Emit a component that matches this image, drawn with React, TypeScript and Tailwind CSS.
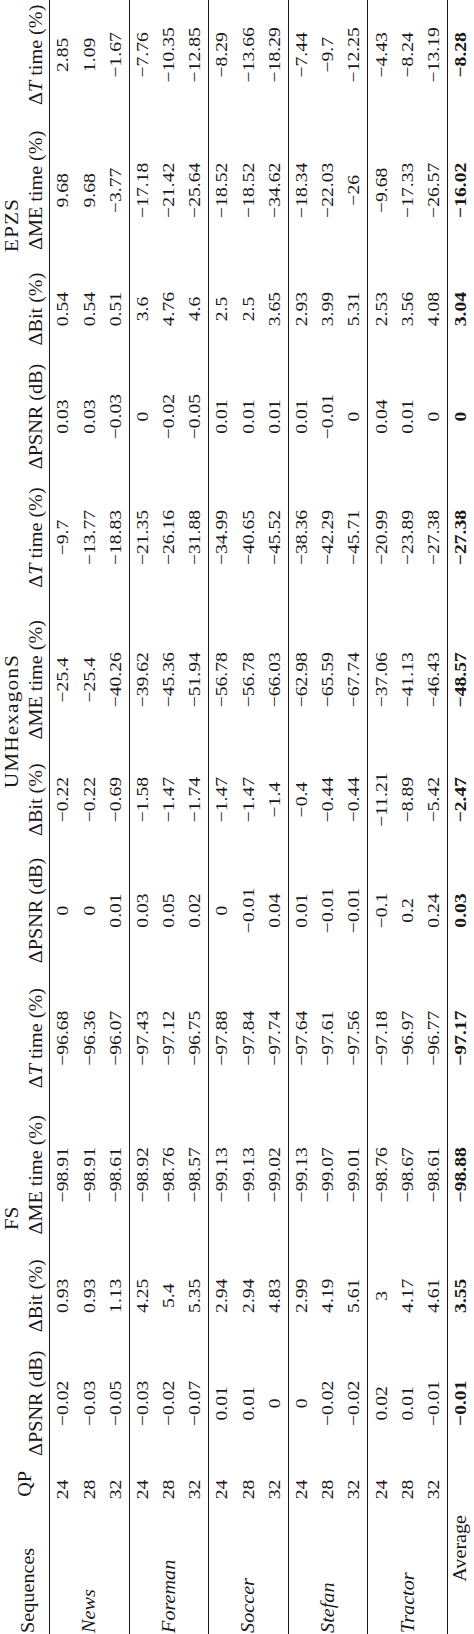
const groups: { name: string; rows: string[][] }[] = [
  {
    name: 'News',
    rows: [
      ['24', '-0.02', '0.93', '-98.91', '-96.68', '0', '-0.22', '-25.4', '-9.7', '0.03', '0.54', '9.68', '2.85'],
      ['28', '-0.03', '0.93', '-98.91', '-96.36', '0', '-0.22', '-25.4', '-13.77', '0.03', '0.54', '9.68', '1.09'],
      ['32', '-0.05', '1.13', '-98.61', '-96.07', '0.01', '-0.69', '-40.26', '-18.83', '-0.03', '0.51', '-3.77', '-1.67'],
    ],
  },
  {
    name: 'Foreman',
    rows: [
      ['24', '-0.03', '4.25', '-98.92', '-97.43', '0.03', '-1.58', '-39.62', '-21.35', '0', '3.6', '-17.18', '-7.76'],
      ['28', '-0.02', '5.4', '-98.76', '-97.12', '0.05', '-1.47', '-45.36', '-26.16', '-0.02', '4.76', '-21.42', '-10.35'],
      ['32', '-0.07', '5.35', '-98.57', '-96.75', '0.02', '-1.74', '-51.94', '-31.88', '-0.05', '4.6', '-25.64', '-12.85'],
    ],
  },
  {
    name: 'Soccer',
    rows: [
      ['24', '0.01', '2.94', '-99.13', '-97.88', '0', '-1.47', '-56.78', '-34.99', '0.01', '2.5', '-18.52', '-8.29'],
      ['28', '0.01', '2.94', '-99.13', '-97.84', '-0.01', '-1.47', '-56.78', '-40.65', '0.01', '2.5', '-18.52', '-13.66'],
      ['32', '0', '4.83', '-99.02', '-97.74', '0.04', '-1.4', '-66.03', '-45.52', '0.01', '3.65', '-34.62', '-18.29'],
    ],
  },
  {
    name: 'Stefan',
    rows: [
      ['24', '0', '2.99', '-99.13', '-97.64', '0.01', '-0.4', '-62.98', '-38.36', '0.01', '2.93', '-18.34', '-7.44'],
      ['28', '-0.02', '4.19', '-99.07', '-97.61', '-0.01', '-0.44', '-65.59', '-42.29', '-0.01', '3.99', '-22.03', '-9.7'],
      ['32', '-0.02', '5.61', '-99.01', '-97.56', '-0.01', '-0.44', '-67.74', '-45.71', '0', '5.31', '-26', '-12.25'],
    ],
  },
  {
    name: 'Tractor',
    rows: [
      ['24', '0.02', '3', '-98.76', '-97.18', '-0.1', '-11.21', '-37.06', '-20.99', '0.04', '2.53', '-9.68', '-4.43'],
      ['28', '0.01', '4.17', '-98.67', '-96.97', '0.2', '-8.89', '-41.13', '-23.89', '0.01', '3.56', '-17.33', '-8.24'],
      ['32', '-0.01', '4.61', '-98.61', '-96.77', '0.24', '-5.42', '-46.43', '-27.38', '0', '4.08', '-26.57', '-13.19'],
    ],
  },
]

const average = ['-0.01', '3.55', '-98.88', '-97.17', '0.03', '-2.47', '-48.57', '-27.38', '0', '3.04', '-16.02', '-8.28']

// full row: sequences + QP + 12 value columns
const cols = 'grid grid-cols-[105px_48px_106px_86px_130px_114px_114px_84px_130px_124px_92px_100px_112px_130px]'
// row without the sequence-name column
const valueCols = 'grid grid-cols-[48px_106px_86px_130px_114px_114px_84px_130px_124px_92px_100px_112px_130px]'

const fmt = (v: string) => v.replace('-', '\u2212')

const subHeads = [
  <span>ΔPSNR (dB)</span>,
  <span>ΔBit (%)</span>,
  <span>ΔME time (%)</span>,
  <span>
    Δ<span className="italic">T</span> time (%)
  </span>,
]

export default function App() {
  return (
    <div className="w-[474px] h-[1634px] overflow-hidden bg-white">
      <div
        className="w-[1475px] h-[474px] origin-top-left [transform:translateY(1634px)_rotate(-90deg)_scaleX(1.12)] flex flex-col text-[#1a1718] text-[17.5px] leading-none"
        style={{ fontFamily: '"Liberation Serif", "Times New Roman", serif' }}
      >
        {/* header */}
        <div className={`${cols} grid-rows-[22px_28px] h-[50px] border-b border-[#1a1718] text-[18px]`}>
          <div className="row-span-2 flex items-center pl-[1px] pt-[6px]">Sequences</div>
          <div className="row-span-2 flex items-center justify-center pl-[10px]">QP</div>
          <div className="col-span-4 flex items-center justify-center text-[19px]">FS</div>
          <div className="col-span-4 flex items-center justify-center text-[19px] tracking-[1px]">UMHexagonS</div>
          <div className="col-span-4 flex items-center justify-center text-[19px] tracking-[1px]">EPZS</div>
          {[0, 1, 2].flatMap((g) =>
            subHeads.map((h, i) => (
              <div key={`${g}-${i}`} className="flex items-center justify-center whitespace-nowrap">
                {h}
              </div>
            ))
          )}
        </div>

        {/* groups */}
        {groups.map((grp) => (
          <div key={grp.name} className="flex border-b border-[#1a1718]">
            <div className="w-[105px] shrink-0 flex items-center pl-[1px] italic text-[18px]">{grp.name}</div>
            <div className="flex flex-col">
              {grp.rows.map((r, ri) => (
                <div key={ri} className={`${valueCols} h-[26.2px]`}>
                  {r.map((v, ci) => (
                    <div key={ci} className="flex items-center justify-center whitespace-nowrap">
                      {fmt(v)}
                    </div>
                  ))}
                </div>
              ))}
            </div>
          </div>
        ))}

        {/* average */}
        <div className={`${cols} h-[25px]`}>
          <div className="col-span-2 flex items-center justify-center text-[18px]">Average</div>
          {average.map((v, i) => (
            <div key={i} className="flex items-center justify-center font-bold whitespace-nowrap">
              {fmt(v)}
            </div>
          ))}
        </div>
      </div>
    </div>
  )
}
